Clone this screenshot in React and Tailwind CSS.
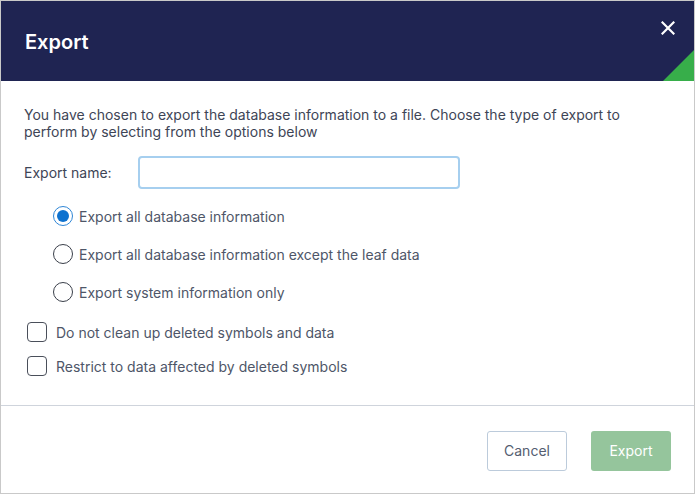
export default function App() {
  return (
    <div className="w-[696px] h-[495px] bg-white" style={{ fontFamily: "Inter, 'Noto Sans', sans-serif" }}>
      <div className="w-[695px] h-[494px] border border-[#c9c9c9] flex flex-col">
        <div className="relative h-[80px] bg-[#1f2452] flex items-center px-6 overflow-hidden">
          <h1 className="text-[20px] font-semibold text-white leading-none mt-[2px]">Export</h1>
          <button className="absolute right-[19px] top-[20px] text-white">
            <svg width="14" height="14" viewBox="0 0 14 14">
              <path d="M1.5 1.5 L12.5 12.5 M12.5 1.5 L1.5 12.5" stroke="white" strokeWidth="2.2" strokeLinecap="square" />
            </svg>
          </button>
          <svg className="absolute right-0 bottom-0" width="31" height="31" viewBox="0 0 31 31">
            <path d="M31 0 L31 31 L0 31 Z" fill="#37ae4a" />
          </svg>
        </div>

        <div className="flex-1 px-[23px] pt-[25px] text-[14px] text-[#3e4556]">
          <p className="leading-[17px]">
            You have chosen to export the database information to a file. Choose the type of export to perform by selecting from the options below
          </p>
          <div className="flex items-center mt-[16px]">
            <label className="w-[114px] text-[#3e4556]">Export name:</label>
            <input className="w-[322px] h-[33px] rounded-[4px] border-2 border-[#a6cfef] outline-none" />
          </div>

          <div className="mt-[17px] pl-[29px] flex flex-col gap-[18px] text-[#4e5668]">
            <label className="flex items-center gap-[6px] h-[20px]">
              <span className="w-[20px] h-[20px] rounded-full border border-[#2f86d6] flex items-center justify-center">
                <span className="w-[12px] h-[12px] rounded-full bg-[#0e72cf]" />
              </span>
              Export all database information
            </label>
            <label className="flex items-center gap-[6px] h-[20px]">
              <span className="w-[20px] h-[20px] rounded-full border border-[#3a3f4a]" />
              Export all database information except the leaf data
            </label>
            <label className="flex items-center gap-[6px] h-[20px]">
              <span className="w-[20px] h-[20px] rounded-full border border-[#3a3f4a]" />
              Export system information only
            </label>
          </div>

          <div className="mt-[20px] pl-[3px] flex flex-col gap-[14px] text-[#4e5668]">
            <label className="flex items-center gap-[9px] h-[20px]">
              <span className="w-[20px] h-[20px] rounded-[4px] border border-[#4a4f5a]" />
              Do not clean up deleted symbols and data
            </label>
            <label className="flex items-center gap-[9px] h-[20px]">
              <span className="w-[20px] h-[20px] rounded-[4px] border border-[#4a4f5a]" />
              Restrict to data affected by deleted symbols
            </label>
          </div>
        </div>

        <div className="h-[88px] border-t border-[#cfd4dc] flex items-center justify-end gap-[24px] pr-[23px] pt-[2px]">
          <button className="w-[80px] h-[40px] rounded-[3px] border border-[#bccbdb] text-[14px] text-[#545d70] bg-white">
            Cancel
          </button>
          <button className="w-[80px] h-[40px] rounded-[3px] bg-[#95c59c] text-[14px] text-white">
            Export
          </button>
        </div>
      </div>
    </div>
  );
}
